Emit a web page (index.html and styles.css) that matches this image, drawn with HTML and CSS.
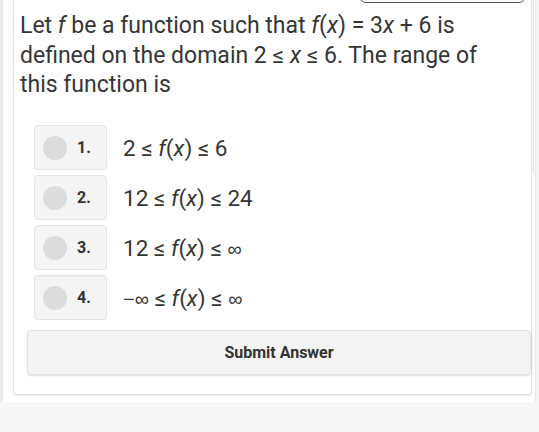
FILE: index.html
```html
<!DOCTYPE html>
<html lang="en">
<head>
    <meta charset="UTF-8">
    <meta name="viewport" content="width=device-width, initial-scale=1.0">
    <title>Question</title>
    <link rel="stylesheet" href="styles.css">
</head>
<body>
    <div class="panel">
        <div class="card">
            <div class="toolbar">
                <button class="top-btn"></button>
            </div>

            <p class="question">Let <i>f</i> be a function such that <i>f</i>(<i>x</i>) = 3<i>x</i> + 6 is defined on the domain 2 ≤ <i>x</i> ≤ 6. The range of this function is</p>

            <div class="options">
                <div class="option">
                    <div class="choice"><span class="dot"></span><span class="num">1.</span></div>
                    <div class="answer">2 ≤ <i>f</i>(<i>x</i>) ≤ 6</div>
                </div>
                <div class="option">
                    <div class="choice"><span class="dot"></span><span class="num">2.</span></div>
                    <div class="answer">12 ≤ <i>f</i>(<i>x</i>) ≤ 24</div>
                </div>
                <div class="option">
                    <div class="choice"><span class="dot"></span><span class="num">3.</span></div>
                    <div class="answer">12 ≤ <i>f</i>(<i>x</i>) ≤ <span class="sym">∞</span></div>
                </div>
                <div class="option">
                    <div class="choice"><span class="dot"></span><span class="num">4.</span></div>
                    <div class="answer"><span class="sym">−∞</span> ≤ <i>f</i>(<i>x</i>) ≤ <span class="sym">∞</span></div>
                </div>
            </div>

            <button class="submit">Submit Answer</button>
        </div>
        <div class="side"></div>
    </div>
</body>
</html>
```

FILE: styles.css
```css
body {
    margin: 0;
    background: #f7f7f7;
    font-family: Roboto, 'Liberation Sans', sans-serif;
    color: #333;
}
.panel {
    position: relative;
    width: 532px;
    padding-bottom: 7px;
    background: #fff;
    border-left: 3px solid #ececec;
    box-shadow: 0 1px 3px rgba(0,0,0,0.15);
    overflow: hidden;
}
.card {
    margin-left: 10px;
    width: 510px;
    padding: 0 1px 19px 6px;
    border: 1px solid #e2e2e2;
    border-top: none;
    border-radius: 0 0 4px 4px;
    box-shadow: 0 1px 2px rgba(0,0,0,0.08);
}
.toolbar {
    display: flex;
    justify-content: flex-end;
    height: 3px;
    overflow: hidden;
    padding-right: 4px;
}
.top-btn {
    width: 167px;
    height: 30px;
    margin-top: -27px;
    border: 1px solid #555;
    border-radius: 7px;
    background: #fff;
}
.question {
    margin: 8px 12px 0 0;
    font-size: 23px;
    line-height: 29.7px;
    color: #363636;
}
.options {
    margin: 25px 0 0 14px;
    display: flex;
    flex-direction: column;
    gap: 5px;
}
.option {
    display: flex;
    align-items: center;
    gap: 16px;
}
.choice {
    display: flex;
    align-items: center;
    gap: 10px;
    padding-left: 8px;
    box-sizing: border-box;
    width: 73px;
    height: 45px;
    background: #f5f5f5;
    border: 1px solid #e4e4e4;
    border-radius: 4px;
}
.dot {
    width: 24px;
    height: 24px;
    border-radius: 50%;
    background: #dcdcdc;
}
.num {
    font-size: 16px;
    font-weight: bold;
    color: #333;
}
.answer {
    font-size: 22.5px;
    color: #363636;
}
.sym {
    font-family: 'Liberation Sans', sans-serif;
    font-size: 20px;
}
.submit {
    display: block;
    margin: 10px 0 0 7px;
    width: 504px;
    height: 45px;
    background: #f4f4f4;
    border: 1px solid #e2e2e2;
    border-radius: 4px;
    box-shadow: 0 1px 2px rgba(0,0,0,0.12);
    font-family: Roboto, 'Liberation Sans', sans-serif;
    font-size: 16px;
    font-weight: bold;
    color: #333;
}
.side {
    position: absolute;
    top: 0;
    right: -4px;
    width: 5px;
    height: 176px;
    border-left: 1px solid #dedede;
    border-bottom-left-radius: 5px;
}
```
